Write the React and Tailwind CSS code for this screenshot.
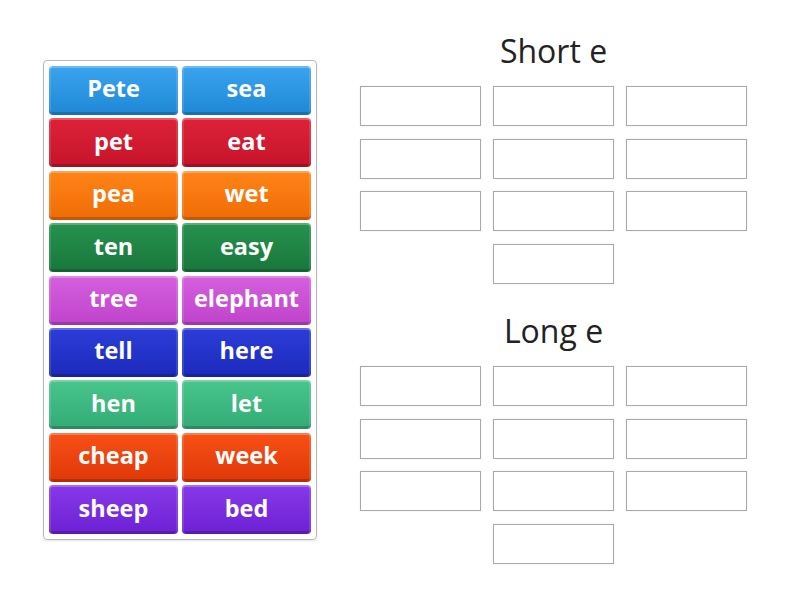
import React from "react";

const tiles = [
  ["Pete", "sea", "from-[#3ba4ee] to-[#1e88d6]"],
  ["pet", "eat", "from-[#de2238] to-[#c51329]"],
  ["pea", "wet", "from-[#ff8417] to-[#ef6c05]"],
  ["ten", "easy", "from-[#26924e] to-[#19773c]"],
  ["tree", "elephant", "from-[#d560de] to-[#bf42cb]"],
  ["tell", "here", "from-[#2c3dd8] to-[#1c2abb]"],
  ["hen", "let", "from-[#48c68c] to-[#33aa75]"],
  ["cheap", "week", "from-[#f85016] to-[#de3807]"],
  ["sheep", "bed", "from-[#8838e8] to-[#6c20d4]"],
];

function Tile({ word, color }) {
  return (
    <div
      className={`h-[49px] rounded-[4px] bg-linear-to-b ${color} flex items-center justify-center pb-[3px] text-white font-bold text-[23.5px] shadow-[inset_0_2px_0_rgba(255,255,255,0.25),inset_2px_0_0_rgba(255,255,255,0.12),inset_-2px_0_0_rgba(255,255,255,0.12),inset_0_-3px_0_rgba(0,0,0,0.18)]`}
    >
      {word}
    </div>
  );
}

function Group({ title, className }) {
  return (
    <div className={className}>
      <div className="h-[40px] leading-[40px] text-center text-[32px] text-[#222]">{title}</div>
      <div className="mt-[15px] grid grid-cols-3 gap-x-[12px] gap-y-[12.67px]">
        {Array.from({ length: 9 }).map((_, i) => (
          <div key={i} className="h-[40px] border border-[#a9a9a9] bg-white shadow-[0_0_2px_rgba(0,0,0,0.08)]" />
        ))}
        <div />
        <div className="h-[40px] border border-[#a9a9a9] bg-white shadow-[0_0_2px_rgba(0,0,0,0.08)]" />
      </div>
    </div>
  );
}

export default function App() {
  return (
    <div className="w-[800px] h-[600px] bg-white flex items-start font-['Open_Sans',sans-serif]">
      <div className="ml-[43px] mt-[60px] w-[274px] border border-[#b9b9b9] rounded-[4px] p-[5px] shadow-[0_1px_2px_rgba(0,0,0,0.1)] grid grid-cols-2 gap-x-[4px] gap-y-[3.4px]">
        {tiles.map(([a, b, c]) => (
          <React.Fragment key={a}>
            <Tile word={a} color={c} />
            <Tile word={b} color={c} />
          </React.Fragment>
        ))}
      </div>
      <div className="ml-[43px] mt-[31px] w-[387px]">
        <Group title="Short e" />
        <Group title="Long e" className="mt-[27px]" />
      </div>
    </div>
  );
}
